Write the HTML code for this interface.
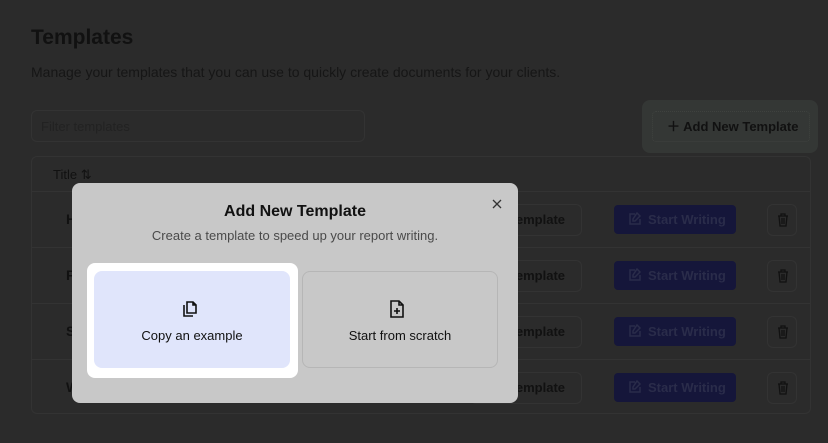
<!DOCTYPE html>
<html><head><style>
*{box-sizing:border-box;margin:0;padding:0}
body{width:828px;height:443px;background:#2b2b2b;font-family:"Liberation Sans",sans-serif;position:relative;overflow:hidden}
.a{position:absolute}
.btnT{position:absolute;left:470px;width:112px;height:32px;border:1px solid #333;border-radius:6px;color:#111;font-size:13px;font-weight:bold;line-height:30px;text-align:right;padding-right:16px}
.sw{position:absolute;left:614px;width:122px;height:29px;background:#15163a;border-radius:4px;color:#2a2c4a;font-size:13px;font-weight:bold;line-height:29px;padding-left:34px}
.sw svg{position:absolute;left:14px;top:7px}
.tr{position:absolute;left:767px;width:30px;height:32px;border:1px solid #333;border-radius:6px}
.tr svg{position:absolute;left:8px;top:8px}
.row{position:absolute;left:31px;width:780px;height:1px;background:#333}
.lt{position:absolute;left:66px;font-size:14px;font-weight:bold;color:#111}
</style></head><body>
<div class="a" style="left:31px;top:26px;font-size:21px;font-weight:bold;color:#111">Templates</div>
<div class="a" style="left:31px;top:64px;font-size:14px;color:#161616">Manage your templates that you can use to quickly create documents for your clients.</div>
<div class="a" style="left:31px;top:110px;width:334px;height:32px;border:1px solid #333;border-radius:6px;font-size:13px;color:#222;padding:8px 9px">Filter templates</div>
<div class="a" style="left:642px;top:100px;width:176px;height:53px;background:#343735;border-radius:8px"></div>
<div class="a" style="left:652px;top:111px;width:158px;height:31px;border:1px dotted #3f423f;border-radius:4px;font-size:13px;font-weight:bold;color:#111;line-height:29px;padding-left:14px">＋ Add New Template</div>
<div class="a" style="left:31px;top:156px;width:780px;height:258px;border:1px solid #333;border-radius:6px"></div>
<div class="a" style="left:53px;top:167px;font-size:13px;color:#111">Title ⇅</div>
<div class="row" style="top:191px"></div><div class="row" style="top:247px"></div><div class="row" style="top:303px"></div><div class="row" style="top:359px"></div>
<div class="lt" style="top:211px">H</div><div class="lt" style="top:267px">F</div><div class="lt" style="top:323px">S</div><div class="lt" style="top:379px">W</div>

<div class="btnT" style="top:204px">Template</div><div class="btnT" style="top:260px">Template</div><div class="btnT" style="top:316px">Template</div><div class="btnT" style="top:372px">Template</div>
<div class="sw" style="top:205px"><svg width="14" height="14" viewBox="0 0 14 14" fill="none" stroke="#2a2c4a" stroke-width="1.5"><path d="M7 2H2v10h10V7M9 1l3 3-5 5H5V7z"/></svg>Start Writing</div>
<div class="sw" style="top:261px"><svg width="14" height="14" viewBox="0 0 14 14" fill="none" stroke="#2a2c4a" stroke-width="1.5"><path d="M7 2H2v10h10V7M9 1l3 3-5 5H5V7z"/></svg>Start Writing</div>
<div class="sw" style="top:317px"><svg width="14" height="14" viewBox="0 0 14 14" fill="none" stroke="#2a2c4a" stroke-width="1.5"><path d="M7 2H2v10h10V7M9 1l3 3-5 5H5V7z"/></svg>Start Writing</div>
<div class="sw" style="top:373px"><svg width="14" height="14" viewBox="0 0 14 14" fill="none" stroke="#2a2c4a" stroke-width="1.5"><path d="M7 2H2v10h10V7M9 1l3 3-5 5H5V7z"/></svg>Start Writing</div>
<div class="tr" style="top:204px"><svg width="14" height="14" viewBox="0 0 14 14" fill="none" stroke="#111" stroke-width="1.3"><path d="M2 3h10M5 3V1h4v2M3 3l1 10h6l1-10M6 5v6M8 5v6"/></svg></div>
<div class="tr" style="top:260px"><svg width="14" height="14" viewBox="0 0 14 14" fill="none" stroke="#111" stroke-width="1.3"><path d="M2 3h10M5 3V1h4v2M3 3l1 10h6l1-10M6 5v6M8 5v6"/></svg></div>
<div class="tr" style="top:316px"><svg width="14" height="14" viewBox="0 0 14 14" fill="none" stroke="#111" stroke-width="1.3"><path d="M2 3h10M5 3V1h4v2M3 3l1 10h6l1-10M6 5v6M8 5v6"/></svg></div>
<div class="tr" style="top:372px"><svg width="14" height="14" viewBox="0 0 14 14" fill="none" stroke="#111" stroke-width="1.3"><path d="M2 3h10M5 3V1h4v2M3 3l1 10h6l1-10M6 5v6M8 5v6"/></svg></div>

<div class="a" style="left:72px;top:183px;width:446px;height:220px;background:#c8c8c8;border-radius:8px">
  <div class="a" style="left:0;width:446px;top:20px;text-align:center;font-size:16px;font-weight:bold;color:#111">Add New Template</div>
  <div class="a" style="left:0;width:446px;top:45px;text-align:center;font-size:13px;color:#4a4a4a">Create a template to speed up your report writing.</div>
  <svg class="a" style="left:419px;top:15px" width="12" height="12" viewBox="0 0 12 12" stroke="#333" stroke-width="1.3"><path d="M2 2l8 8M10 2l-8 8"/></svg>
  <div class="a" style="left:15px;top:80px;width:211px;height:115px;background:#fff;border-radius:8px"></div>
  <div class="a" style="left:22px;top:88px;width:196px;height:97px;background:#e0e5fb;border-radius:8px">
    <svg class="a" style="left:86px;top:28px" width="20" height="20" viewBox="0 0 20 20" fill="none" stroke="#111" stroke-width="1.6"><path d="M7 3h6l3 3v8H7z M13 3v3h3 M4 6v11h9"/></svg>
    <div class="a" style="left:0;width:196px;top:57px;text-align:center;font-size:13px;color:#111">Copy an example</div>
  </div>
  <div class="a" style="left:230px;top:88px;width:196px;height:97px;border:1px solid #b6b6b6;border-radius:8px">
    <svg class="a" style="left:84px;top:27px" width="20" height="20" viewBox="0 0 20 20" fill="none" stroke="#111" stroke-width="1.6"><path d="M4 2h8l4 4v12H4z M12 2v4h4 M10 9v6 M7 12h6"/></svg>
    <div class="a" style="left:0;width:194px;top:56px;text-align:center;font-size:13px;color:#111">Start from scratch</div>
  </div>
</div>
</body></html>
